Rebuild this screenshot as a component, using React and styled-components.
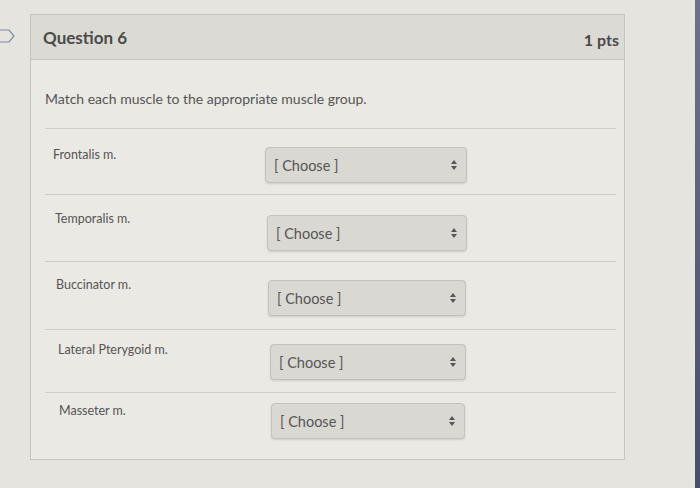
import React from "react";
import styled, { createGlobalStyle } from "styled-components";

const GlobalStyle = createGlobalStyle`
  html, body {
    margin: 0;
    padding: 0;
    background: #e6e4df;
    font-family: Lato, "Liberation Sans", sans-serif;
  }
`;

const Page = styled.div`
  width: 700px;
  height: 488px;
  display: flex;
  align-items: flex-start;
  padding-top: 14px;
  box-sizing: border-box;
  position: relative;
  overflow: hidden;
`;

const Gutter = styled.div`
  width: 30px;
  flex-shrink: 0;
  padding-top: 13px;
`;

const EdgeStrip = styled.div`
  position: absolute;
  right: 0;
  top: 0;
  width: 5px;
  height: 100%;
  background: linear-gradient(#6a7488, #44506a);
`;

const Card = styled.div`
  width: 595px;
  height: 446px;
  background: #ebe9e4;
  border: 1px solid #c6c4bf;
  box-sizing: border-box;
  display: flex;
  flex-direction: column;
`;

const Header = styled.div`
  height: 45px;
  background: #dcdad5;
  border-bottom: 1px solid #c6c4bf;
  display: flex;
  align-items: center;
  justify-content: space-between;
  padding: 0 5px 0 12px;
  color: #4a4a4a;
  font-weight: 700;
  font-size: 17px;
`;

const Pts = styled.span`
  font-size: 16px;
  padding-top: 4px;
`;

const Body = styled.div`
  padding: 30px 8px 0 14px;
  display: flex;
  flex-direction: column;
`;

const Prompt = styled.p`
  margin: 0 0 21px;
  font-size: 14px;
  color: #555;
`;

const Divider = styled.div`
  height: 1px;
  background: #cfcdc8;
`;

const Row = styled.div`
  height: ${(p) => p.$h}px;
  box-sizing: border-box;
  display: flex;
  align-items: flex-start;
  padding: ${(p) => p.$top}px 0 0 ${(p) => p.$left}px;
  border-bottom: ${(p) => (p.$last ? "none" : "1px solid #cfcdc8")};
`;

const Label = styled.div`
  width: 212px;
  flex-shrink: 0;
  font-size: 12.5px;
  color: #555;
  margin-top: ${(p) => p.$lift}px;
`;

const Select = styled.div`
  width: ${(p) => p.$w}px;
  height: 36px;
  box-sizing: border-box;
  background: #dad8d3;
  border: 1px solid #c4c2bd;
  border-radius: 4px;
  box-shadow: 0 1px 2px rgba(0, 0, 0, 0.12);
  display: flex;
  align-items: center;
  justify-content: space-between;
  padding: 0 8px 0 8px;
  font-size: 14.5px;
  color: #555;
  margin-top: ${(p) => p.$offset}px;
`;

const Arrow = () => (
  <svg width="8" height="12" viewBox="0 0 8 12">
    <path d="M4 1 L7 5 L1 5 Z M4 11 L7 7 L1 7 Z" fill="#555" />
  </svg>
);

const Tab = () => (
  <svg width="16" height="14" viewBox="0 0 16 14">
    <path d="M-2 1 H9 L14 7 L9 13 H-2" fill="none" stroke="#7c8aa8" strokeWidth="1.2" />
  </svg>
);

const rows = [
  { name: "Frontalis m.", left: 8, top: 18, offset: 0, lift: 0, h: 66, w: 202 },
  { name: "Temporalis m.", left: 10, top: 19, offset: 1, lift: -3, h: 67, w: 200 },
  { name: "Buccinator m.", left: 11, top: 17, offset: 1, lift: -2, h: 68, w: 198 },
  { name: "Lateral Pterygoid m.", left: 13, top: 13, offset: 1, lift: -1, h: 63, w: 196 },
  { name: "Masseter m.", left: 14, top: 10, offset: 0, lift: 0, h: 66, w: 194 },
];

const App = () => (
  <>
    <GlobalStyle />
    <Page>
      <Gutter>
        <Tab />
      </Gutter>
      <Card>
        <Header>
          <span>Question 6</span>
          <Pts>1 pts</Pts>
        </Header>
        <Body>
          <Prompt>Match each muscle to the appropriate muscle group.</Prompt>
          <Divider />
          {rows.map((r, i) => (
            <Row key={r.name} $h={r.h} $left={r.left} $top={r.top} $last={i === rows.length - 1}>
              <Label $lift={r.lift}>{r.name}</Label>
              <Select $offset={r.offset} $w={r.w}>
                <span>[ Choose ]</span>
                <Arrow />
              </Select>
            </Row>
          ))}
        </Body>
      </Card>
      <EdgeStrip />
    </Page>
  </>
);

export default App;
